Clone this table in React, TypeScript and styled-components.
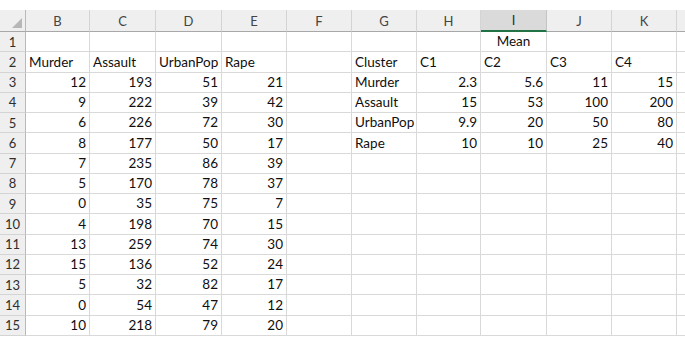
import React from "react";
import styled, { createGlobalStyle } from "styled-components";

const GlobalStyle = createGlobalStyle`
  html, body {
    margin: 0;
    padding: 0;
    background: #ffffff;
  }
  body {
    font-family: Lato, "Liberation Sans", sans-serif;
    color: #0f0f0f;
  }
`;

const ROW_H = 20.25;

const Page = styled.div`
  width: 685px;
  height: 339px;
  padding-top: 10px;
  box-sizing: border-box;
  overflow: hidden;
  background: #ffffff;
`;

const Sheet = styled.div`
  display: grid;
  grid-template-columns: 26px 64px 66px 66px 65px 65px 65px 64px 66px 65px 65px 40px;
  grid-template-rows: 22px repeat(15, ${ROW_H}px);
`;

const Corner = styled.div`
  position: relative;
  background: #efefef;
  border-right: 1px solid #b9b9b9;
  border-bottom: 1px solid #a8a8a8;
  box-sizing: border-box;

  &::after {
    content: "";
    position: absolute;
    right: 3px;
    bottom: 3px;
    width: 0;
    height: 0;
    border-left: 10px solid transparent;
    border-bottom: 10px solid #b7b7b7;
  }
`;

const ColHeader = styled.div<{ $selected?: boolean }>`
  display: flex;
  align-items: center;
  justify-content: center;
  box-sizing: border-box;
  font-size: 13px;
  color: ${(p) => (p.$selected ? "#2b2b2b" : "#444444")};
  background: ${(p) => (p.$selected ? "#dadada" : "#efefef")};
  border-right: 1px solid ${(p) => (p.$selected ? "#c4c4c4" : "#d4d4d4")};
  border-bottom: ${(p) => (p.$selected ? "2px solid #217346" : "1px solid #a8a8a8")};
`;

const RowHeader = styled.div`
  display: flex;
  align-items: center;
  justify-content: center;
  box-sizing: border-box;
  font-size: 13px;
  color: #2e2e2e;
  background: #efefef;
  border-right: 1px solid #b9b9b9;
  border-bottom: 1px solid #d4d4d4;
`;

const Cell = styled.div<{ $align?: "left" | "right" | "center" }>`
  display: flex;
  align-items: flex-end;
  justify-content: ${(p) =>
    p.$align === "right" ? "flex-end" : p.$align === "center" ? "center" : "flex-start"};
  box-sizing: border-box;
  padding: 0 3px 1px 3px;
  font-size: 13.5px;
  line-height: 17px;
  white-space: nowrap;
  border-right: 1px solid #d9d9d9;
  border-bottom: 1px solid #d9d9d9;
`;

const columns = ["B", "C", "D", "E", "F", "G", "H", "I", "J", "K", ""];

const leftData: (number | string)[][] = [
  ["Murder", "Assault", "UrbanPop", "Rape"],
  [12, 193, 51, 21],
  [9, 222, 39, 42],
  [6, 226, 72, 30],
  [8, 177, 50, 17],
  [7, 235, 86, 39],
  [5, 170, 78, 37],
  [0, 35, 75, 7],
  [4, 198, 70, 15],
  [13, 259, 74, 30],
  [15, 136, 52, 24],
  [5, 32, 82, 17],
  [0, 54, 47, 12],
  [10, 218, 79, 20],
];

const meanData: (number | string)[][] = [
  ["Cluster", "C1", "C2", "C3", "C4"],
  ["Murder", 2.3, 5.6, 11, 15],
  ["Assault", 15, 53, 100, 200],
  ["UrbanPop", 9.9, 20, 50, 80],
  ["Rape", 10, 10, 25, 40],
];

const valueAt = (row: number, col: number): number | string | undefined => {
  // row is 1-based sheet row, col is 0-based index into columns (B = 0)
  if (row === 1) return col === 7 ? "Mean" : undefined;
  const r = row - 2;
  if (col <= 3) return leftData[r]?.[col];
  if (col >= 5 && col <= 9) return meanData[r]?.[col - 5];
  return undefined;
};

const App = () => {
  const rows = Array.from({ length: 15 }, (_, i) => i + 1);

  return (
    <Page>
      <GlobalStyle />
      <Sheet>
        <Corner />
        {columns.map((c) => (
          <ColHeader key={c || "L"} $selected={c === "I"}>
            {c}
          </ColHeader>
        ))}

        {rows.map((row) => (
          <React.Fragment key={row}>
            <RowHeader>{row}</RowHeader>
            {columns.map((c, col) => {
              const v = valueAt(row, col);
              const align =
                row === 1 ? "center" : typeof v === "number" ? "right" : "left";
              return (
                <Cell key={c || "L"} $align={align}>
                  {v}
                </Cell>
              );
            })}
          </React.Fragment>
        ))}
      </Sheet>
    </Page>
  );
};

export default App;
